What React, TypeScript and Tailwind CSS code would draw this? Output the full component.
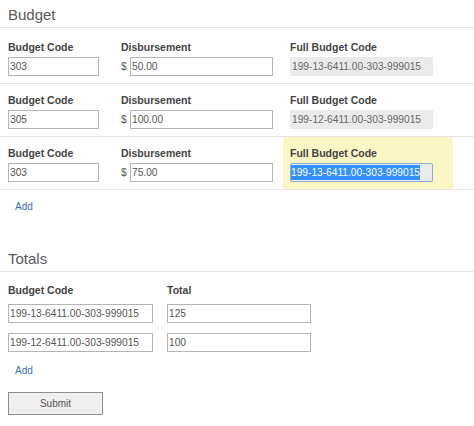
import React from "react";

type Line = { code: string; amount: string; full: string; focused?: boolean };

const lines: Line[] = [
  { code: "303", amount: "50.00", full: "199-13-6411.00-303-999015" },
  { code: "305", amount: "100.00", full: "199-12-6411.00-303-999015" },
  { code: "303", amount: "75.00", full: "199-13-6411.00-303-999015", focused: true },
];

const totals = [
  { code: "199-13-6411.00-303-999015", total: "125" },
  { code: "199-12-6411.00-303-999015", total: "100" },
];

function Label({ children }: { children: React.ReactNode }) {
  return <div className="text-[10.5px] font-bold leading-[14px] text-[#444]">{children}</div>;
}

function Field({ value, className = "" }: { value: string; className?: string }) {
  return (
    <div className={`flex h-[19px] items-center border border-[#b4b4b4] bg-white pl-[1px] text-[10.2px] text-[#555] ${className}`}>
      {value}
    </div>
  );
}

function SectionTitle({ children }: { children: React.ReactNode }) {
  return (
    <div className="h-[28px] border-b border-[#e6e6e6] pl-2 pt-[6px] text-[15px] leading-[18px] text-[#5a5a5a]">
      {children}
    </div>
  );
}

function BudgetRow({ line, first }: { line: Line; first?: boolean }) {
  const pad = first ? "pt-[12px]" : "pt-[9px]";
  return (
    <div className="flex border-b border-[#e6e6e6]">
      <div className={`w-[113px] pl-2 pb-[7px] ${pad}`}>
        <Label>Budget Code</Label>
        <Field value={line.code} className="mt-[3px] w-[91px]" />
      </div>
      <div className={`w-[170px] pl-2 pb-[7px] ${pad}`}>
        <Label>Disbursement</Label>
        <div className="mt-[3px] flex items-center">
          <span className="w-[9px] text-[10.2px] text-[#555]">$</span>
          <Field value={line.amount} className="w-[143px]" />
        </div>
      </div>
      <div className={`w-[170px] pl-[7px] pb-[7px] ${pad} ${line.focused ? "bg-[#fbf6c6]" : ""}`}>
        <Label>Full Budget Code</Label>
        {line.focused ? (
          <div className="mt-[3px] flex h-[19px] w-[143px] items-center rounded-[2px] border border-[#8eaad6] bg-[#ebebeb] text-[10.2px]">
            <span className="bg-[#3390ff] leading-[15px] text-white">{line.full}</span>
          </div>
        ) : (
          <div className="mt-[3px] flex h-[19px] w-[143px] items-center bg-[#ebebeb] pl-[2px] text-[10.2px] text-[#666]">
            {line.full}
          </div>
        )}
      </div>
    </div>
  );
}

export default function App() {
  return (
    <div className="h-[426px] w-[474px] bg-white" style={{ fontFamily: '"Liberation Sans", Arial, sans-serif' }}>
      <SectionTitle>Budget</SectionTitle>
      {lines.map((line, i) => (
        <BudgetRow key={i} line={line} first={i === 0} />
      ))}
      <div className="pl-[15px] pt-[10px] text-[10px] leading-[14px] text-[#3b6fb6]">Add</div>

      <div className="mt-[30px]">
        <SectionTitle>Totals</SectionTitle>
      </div>
      <div className="mt-[11px] flex pl-2">
        <div className="w-[159px]">
          <Label>Budget Code</Label>
        </div>
        <Label>Total</Label>
      </div>
      <div className="mt-[7px] flex flex-col gap-[10px] pl-2">
        {totals.map((t, i) => (
          <div key={i} className="flex">
            <Field value={t.code} className="w-[145px]" />
            <Field value={t.total} className="ml-[14px] w-[144px]" />
          </div>
        ))}
      </div>
      <div className="mt-[12px] pl-[15px] text-[10px] leading-[14px] text-[#3b6fb6]">Add</div>
      <button
        type="button"
        className="ml-2 mt-[14px] h-[23px] w-[95px] border border-[#8f8f8f] bg-[#efefef] text-[10px] text-[#555]"
      >
        Submit
      </button>
    </div>
  );
}
